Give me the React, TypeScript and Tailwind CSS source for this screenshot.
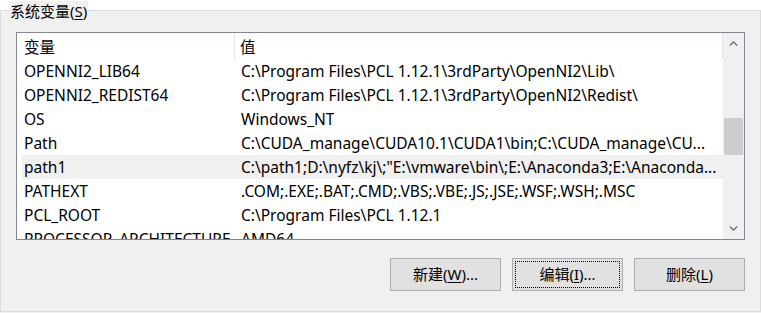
import { ChevronUp, ChevronDown } from 'lucide-react';

const rows: [string, string][] = [
  ['OPENNI2_LIB64', 'C:\\Program Files\\PCL 1.12.1\\3rdParty\\OpenNI2\\Lib\\'],
  ['OPENNI2_REDIST64', 'C:\\Program Files\\PCL 1.12.1\\3rdParty\\OpenNI2\\Redist\\'],
  ['OS', 'Windows_NT'],
  ['Path', 'C:\\CUDA_manage\\CUDA10.1\\CUDA1\\bin;C:\\CUDA_manage\\CU...'],
  ['path1', 'C:\\path1;D:\\nyfz\\kj\\;"E:\\vmware\\bin\\;E:\\Anaconda3;E:\\Anaconda...'],
  ['PATHEXT', '.COM;.EXE;.BAT;.CMD;.VBS;.VBE;.JS;.JSE;.WSF;.WSH;.MSC'],
  ['PCL_ROOT', 'C:\\Program Files\\PCL 1.12.1'],
  ['PROCESSOR_ARCHITECTURE', 'AMD64'],
];

const font = { fontFamily: '"Noto Sans", "Noto Sans CJK SC", sans-serif' };

const Btn = ({ label, k, rest, focused = false }: { label: string; k: string; rest: string; focused?: boolean }) => (
  <button className="relative flex h-[33px] w-[111px] items-center justify-center border border-[#adadad] bg-[#e1e1e1] text-[15px] text-black">
    {focused && <span className="pointer-events-none absolute inset-[2px] border border-dotted border-black" />}
    <span>
      {label}(<span className="underline underline-offset-2">{k}</span>){rest}
    </span>
  </button>
);

export default function App() {
  return (
    <div className="h-[313px] w-[761px] bg-[#f0f0f0] text-black" style={font}>
      <div className="relative mt-[10px] h-[302px] border border-[#dcdcdc] px-[15px] pt-[21px]">
        <div className="absolute -top-[10px] left-[8px] bg-[#f0f0f0] px-[1px] text-[15px] leading-[20px]">
          系统变量(<span className="underline underline-offset-2">S</span>)
        </div>

        <div className="flex h-[208px] border border-[#828790] bg-white">
          <div className="flex min-w-0 flex-1 flex-col overflow-hidden text-[15.5px]">
            <div className="flex h-[26px] shrink-0 items-center">
              <div className="flex h-full w-[218px] items-center border-r border-[#e5e5e5] pl-[7px] pt-[4px]">变量</div>
              <div className="flex h-full flex-1 items-center border-r border-[#e5e5e5] pl-[5px] pt-[4px]">值</div>
            </div>
            {rows.map(([name, value]) => (
              <div
                key={name}
                className={`ml-[5px] flex h-[24px] shrink-0 items-center whitespace-nowrap pt-[1px] ${name === 'path1' ? 'bg-[#f0f0f0]' : ''}`}
              >
                <div className="w-[219px] shrink-0 pl-[2px]">{name}</div>
                <div className="overflow-hidden">{value}</div>
              </div>
            ))}
          </div>
          <div className="flex w-[21px] shrink-0 flex-col bg-[#f0f0f0]">
            <div className="flex h-[21px] items-center justify-center text-[#606060]">
              <ChevronUp size={13} strokeWidth={2.5} />
            </div>
            <div className="flex-1 pt-[64px]">
              <div className="mx-auto h-[37px] w-[19px] bg-[#cdcdcd]" />
            </div>
            <div className="flex h-[21px] items-center justify-center text-[#606060]">
              <ChevronDown size={13} strokeWidth={2.5} />
            </div>
          </div>
        </div>

        <div className="mt-[18px] flex justify-end gap-[11px]">
          <Btn label="新建" k="W" rest="..." />
          <Btn label="编辑" k="I" rest="..." focused />
          <Btn label="删除" k="L" rest="" />
        </div>
      </div>
    </div>
  );
}
